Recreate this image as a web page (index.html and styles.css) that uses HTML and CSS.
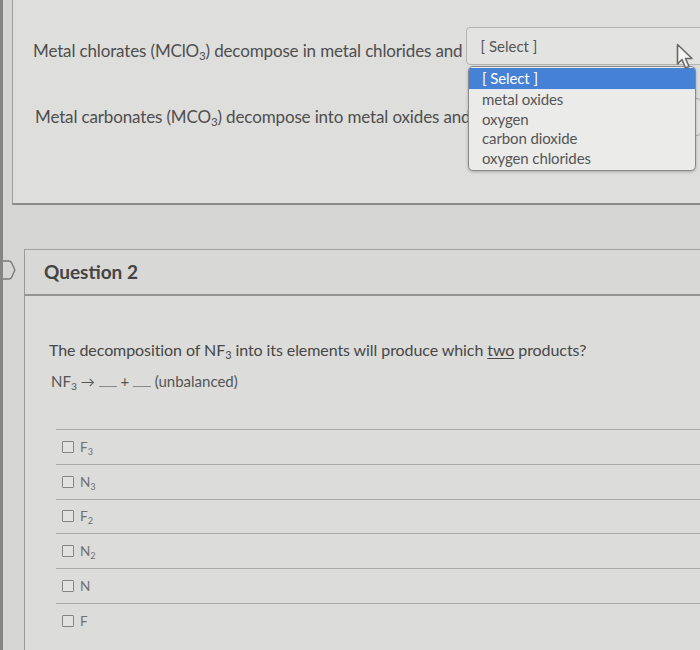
FILE: index.html
```html
<!DOCTYPE html>
<html lang="en">
<head>
<meta charset="utf-8">
<title>Quiz</title>
<link rel="stylesheet" href="styles.css">
</head>
<body>
<div class="screen">
  <section class="card q1">
    <div class="fill-row first">
      <span class="stmt">Metal chlorates (MClO<sub>3</sub>) decompose in metal chlorides and</span>
      <div class="select">[ Select ]</div>
    </div>
    <div class="fill-row second">
      <span class="stmt">Metal carbonates (MCO<sub>3</sub>) decompose into metal oxides and</span>
      <div class="select"></div>
    </div>
    <ul class="dropdown">
      <li class="active">[ Select ]</li>
      <li>metal oxides</li>
      <li>oxygen</li>
      <li>carbon dioxide</li>
      <li>oxygen chlorides</li>
    </ul>
    <svg class="cursor" width="20" height="28" viewBox="0 0 20 28">
      <path d="M1.5 1.5 L1.5 21 L6 16.5 L9.5 25 L13 23.5 L9.5 15.5 L16 15.5 Z" fill="#f4f4f4" stroke="#6a6a6a" stroke-width="1.6" stroke-linejoin="round"/>
    </svg>
  </section>

  <section class="card q2">
    <svg class="marker" width="16" height="22" viewBox="0 0 16 22">
      <path d="M-4 2 L8 2 Q9.5 2 10.5 3.5 L13.5 10 Q14 11 13.5 12 L10.5 18.5 Q9.5 20 8 20 L-4 20" fill="none" stroke="#7a7a7a" stroke-width="1.4"/>
    </svg>
    <header class="q-head">Question 2</header>
    <div class="q-body">
      <p class="prompt">The decomposition of NF<sub>3</sub> into its elements will produce which <u>two</u> products?</p>
      <p class="eq">NF<sub>3</sub> <span class="arrow">&rarr;</span> <span class="blank"></span> + <span class="blank"></span> (unbalanced)</p>
      <ul class="answers">
        <li><span class="box"></span><span class="lbl">F<sub>3</sub></span></li>
        <li><span class="box"></span><span class="lbl">N<sub>3</sub></span></li>
        <li><span class="box"></span><span class="lbl">F<sub>2</sub></span></li>
        <li><span class="box"></span><span class="lbl">N<sub>2</sub></span></li>
        <li><span class="box"></span><span class="lbl">N</span></li>
        <li><span class="box"></span><span class="lbl">F</span></li>
      </ul>
    </div>
  </section>
</div>
</body>
</html>
```

FILE: styles.css
```css
* { box-sizing: border-box; }

html, body {
  margin: 0;
  padding: 0;
}

body {
  background: #d5d5d3;
  font-family: Lato, "Open Sans", sans-serif;
  color: #505050;
  width: 700px;
  height: 650px;
  overflow: hidden;
}

.screen {
  position: relative;
  height: 650px;
  border-left: 3px solid #858585;
  overflow: hidden;
}

sub {
  font-size: 0.68em;
  vertical-align: -0.28em;
  line-height: 0;
}

/* ---------- card 1 ---------- */
.card { position: relative; }

.q1 {
  margin-left: 9px;
  height: 205px;
  background: #dededc;
  border-left: 1px solid #9c9c9c;
  border-bottom: 2px solid #8c8c8c;
  padding: 27px 0 0 20px;
}

.fill-row {
  display: flex;
  align-items: flex-start;
  gap: 3px;
  white-space: nowrap;
}

.fill-row.second { margin-top: 33px; padding-left: 2px; }

.stmt {
  font-size: 17px;
  line-height: 20px;
  letter-spacing: -0.14px;
  padding-top: 14px;
  color: #4e4e4e;
}

.fill-row.second .stmt { padding-top: 9px; }

.select {
  flex-shrink: 0;
  width: 250px;
  height: 38px;
  border: 1px solid #b4b4b2;
  border-radius: 4px;
  background: #e3e3e1;
  font-size: 15px;
  line-height: 36px;
  padding-left: 14px;
  color: #555;
}

.fill-row.second .select { width: 228px; border-color: #a9a9a7; }

.dropdown {
  position: absolute;
  left: 455px;
  top: 66px;
  width: 228px;
  margin: 0;
  padding: 1px 0 2px;
  list-style: none;
  background: #ebebea;
  border: 1px solid #8a8a8a;
  border-radius: 5px;
  box-shadow: 0 1px 3px rgba(0,0,0,0.25);
  font-size: 15px;
  line-height: 19.5px;
  letter-spacing: -0.1px;
  color: #555;
  overflow: hidden;
}

.dropdown li { padding-left: 13px; }

.dropdown li.active {
  background: #4582d6;
  color: #fff;
  line-height: 21px;
  border-bottom: 1px solid #dfe8f4;
}

.cursor {
  position: absolute;
  left: 663px;
  top: 43px;
}

/* ---------- card 2 ---------- */
.q2 {
  margin: 44px 0 0 21px;
  border-left: 1px solid #9a9a9a;
  border-top: 1px solid #a0a0a0;
  background: #dcdcda;
  height: 420px;
}

.marker {
  position: absolute;
  left: -24px;
  top: 9px;
}

.q-head {
  height: 46px;
  background: #d8d8d6;
  border-bottom: 2px solid #959595;
  font-size: 19px;
  font-weight: 700;
  line-height: 44px;
  padding-left: 19px;
  color: #444;
}

.q-body {
  padding: 44px 0 0 24px;
}

.prompt {
  margin: 0;
  font-size: 16px;
  line-height: 20px;
  letter-spacing: -0.08px;
  color: #474747;
}

.prompt u { text-underline-offset: 2px; }

.eq {
  margin: 12px 0 0 2px;
  font-size: 15px;
  line-height: 19px;
  color: #555;
}

.eq .arrow { font-size: 14px; }

.eq .blank {
  display: inline-block;
  width: 18px;
  height: 1px;
  border-bottom: 1px solid #8a8a8a;
  vertical-align: baseline;
}

.answers {
  list-style: none;
  margin: 38px 0 0 7px;
  padding: 0;
}

.answers li {
  height: 34.8px;
  border-top: 1px solid #a9a9a7;
  display: flex;
  align-items: center;
  padding-left: 6px;
  font-size: 13.5px;
  color: #707070;
}

.box {
  flex-shrink: 0;
  width: 12px;
  height: 12px;
  border: 1.5px solid #858585;
  border-radius: 1px;
  background: #e2e2e0;
  margin-right: 6px;
}
```
